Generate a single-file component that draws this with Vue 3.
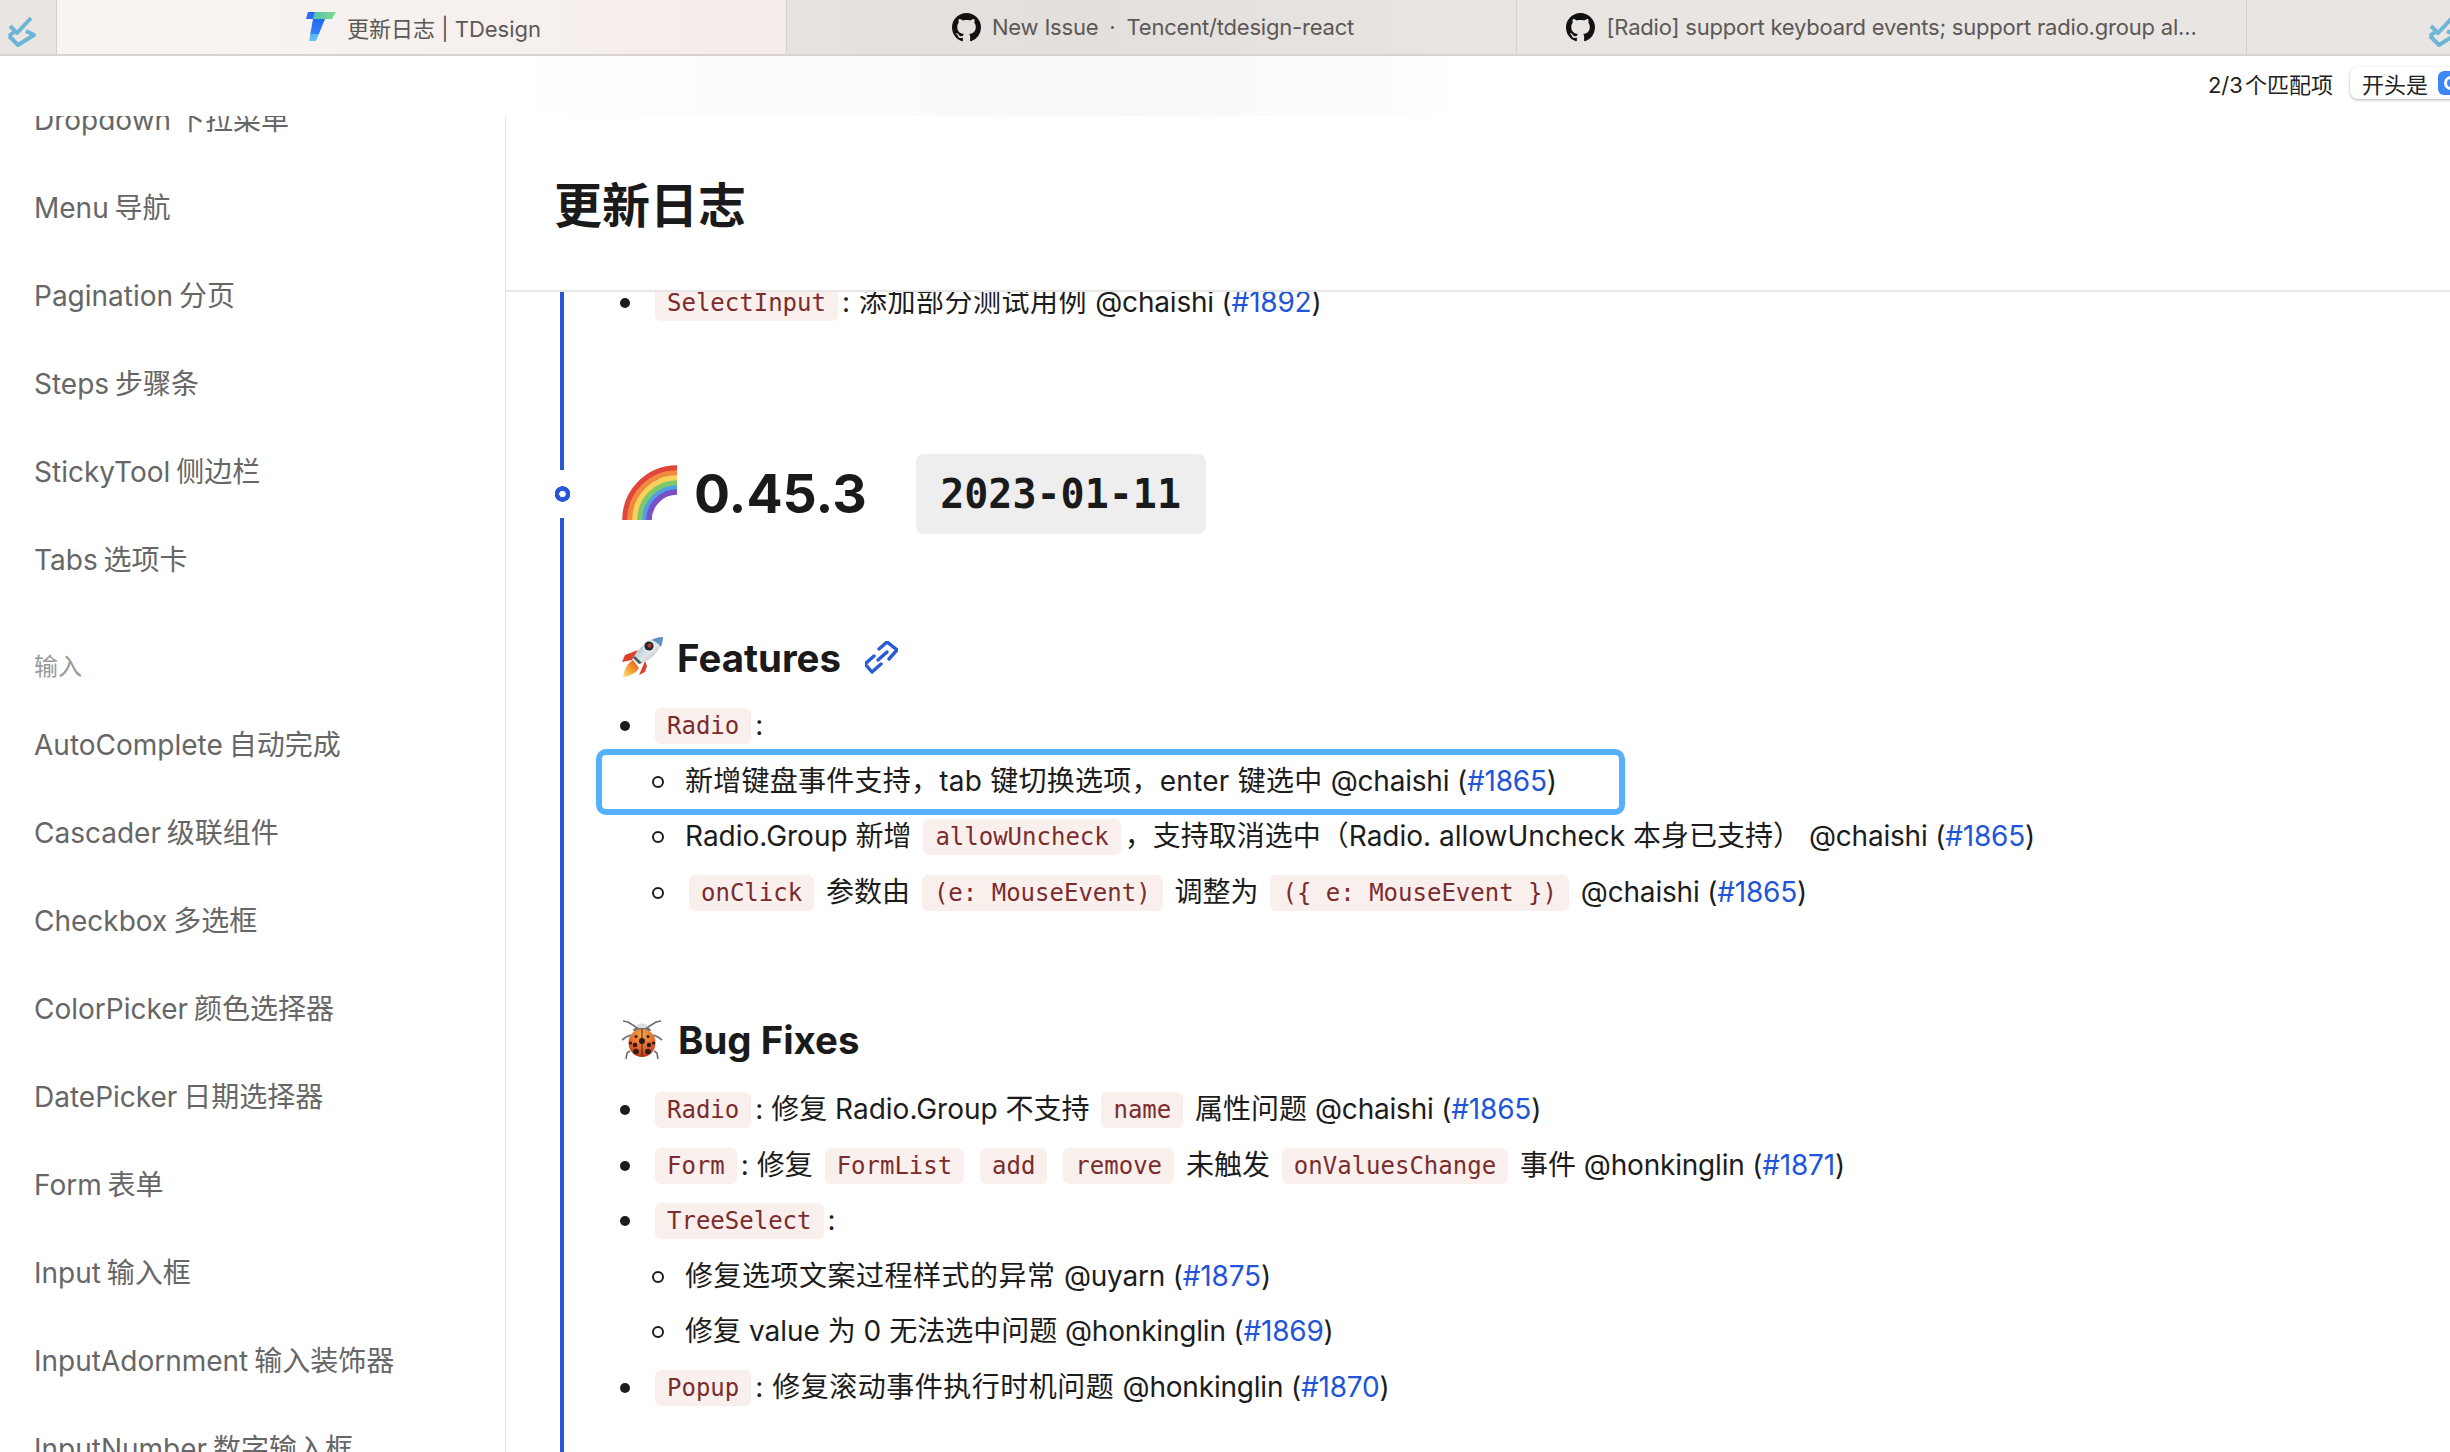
<script setup>
const gh = 'M8 0C3.58 0 0 3.58 0 8c0 3.54 2.29 6.53 5.47 7.59.4.07.55-.17.55-.38 0-.19-.01-.82-.01-1.49-2.01.37-2.53-.49-2.69-.94-.09-.23-.48-.94-.82-1.13-.28-.15-.68-.52-.01-.53.63-.01 1.08.58 1.23.82.72 1.21 1.87.87 2.33.66.07-.52.28-.87.51-1.07-1.78-.2-3.64-.89-3.64-3.95 0-.87.31-1.59.82-2.15-.08-.2-.36-1.02.08-2.12 0 0 .67-.21 2.2.82.64-.18 1.32-.27 2-.27s1.36.09 2 .27c1.53-1.04 2.2-.82 2.2-.82.44 1.1.16 1.92.08 2.12.51.56.82 1.27.82 2.15 0 3.07-1.87 3.75-3.65 3.95.29.25.54.73.54 1.48 0 1.07-.01 1.93-.01 2.2 0 .21.15.46.55.38A8.01 8.01 0 0 0 16 8c0-4.42-3.58-8-8-8z'
const before = ['Dropdown 下拉菜单', 'Menu 导航', 'Pagination 分页', 'Steps 步骤条', 'StickyTool 侧边栏', 'Tabs 选项卡']
const after = ['AutoComplete 自动完成', 'Cascader 级联组件', 'Checkbox 多选框', 'ColorPicker 颜色选择器', 'DatePicker 日期选择器', 'Form 表单', 'Input 输入框', 'InputAdornment 输入装饰器', 'InputNumber 数字输入框']
const bands = [
  ['#e2453c', 52], ['#f08a3c', 47], ['#f8d25a', 42], ['#7cc86a', 37], ['#4f9fe6', 32], ['#7a4fc8', 28]
]
</script>

<template>
  <div class="app">
    <div class="tabs">
      <div class="tab tab-pin">
        <svg class="check" viewBox="0 0 40 45" fill="none" stroke="#6db6d6" stroke-width="4" stroke-linejoin="round">
          <path d="M10 21l7 7L31 13"/>
          <path d="M9 31l9 9 16-10-8-4"/>
          <path d="M9 31l5-4"/>
        </svg>
      </div>
      <div class="tab tab-active">
        <svg class="logo" viewBox="0 0 30 30">
          <defs>
            <linearGradient id="tbar" x1="0" x2="1" y1="0" y2="0"><stop offset="0" stop-color="#4cc6a8"/><stop offset="1" stop-color="#82d992"/></linearGradient>
            <linearGradient id="tstem" x1="0" x2="0" y1="0" y2="1"><stop offset="0" stop-color="#1f6af2"/><stop offset=".66" stop-color="#2f80f6"/><stop offset=".7" stop-color="#54b4f6"/><stop offset="1" stop-color="#62c4f6"/></linearGradient>
          </defs>
          <path d="M9 0h21l-4 7H7z" fill="url(#tbar)"/>
          <path d="M2 0h7L7 7H0z" fill="#2b6cf5"/>
          <path d="M7 7h12l-9 22H3z" fill="url(#tstem)"/>
        </svg>
        <span>更新日志 | TDesign</span>
      </div>
      <div class="tab tab-two">
        <svg class="gh" viewBox="0 0 16 16"><path :d="gh"/></svg>
        <span class="tab-text">New Issue<span class="sep"> · </span>Tencent/tdesign-react</span>
      </div>
      <div class="tab">
        <svg class="gh" viewBox="0 0 16 16"><path :d="gh"/></svg>
        <span class="tab-text">[Radio] support keyboard events; support radio.group al...</span>
      </div>
      <div class="tab tab-end">
        <svg class="check" viewBox="0 0 40 45" fill="none" stroke="#6db6d6" stroke-width="4" stroke-linejoin="round">
          <path d="M10 21l7 7L31 13"/>
          <path d="M9 31l9 9 16-10-8-4"/>
          <path d="M9 31l5-4"/>
        </svg>
      </div>
    </div>

    <div class="findbar">
      <span class="count">2/3 个匹配项</span>
      <div class="findbtn"><span>开头是</span><i class="findmark"></i></div>
    </div>

    <div class="page">
      <aside class="side">
        <div class="side-inner">
          <div v-for="n in before" :key="n" class="nav">{{ n }}</div>
          <div class="group">输入</div>
          <div v-for="n in after" :key="n" class="nav">{{ n }}</div>
        </div>
      </aside>

      <main class="main">
        <header class="head"><h1>更新日志</h1></header>
        <div class="body">
          <div class="timeline">
            <ul class="first">
              <li class="wide"><code>SelectInput</code>: 添加部分测试用例 <span class="by">@chaishi (<a>#1892</a>)</span></li>
            </ul>

            <div class="version">
              <i class="dot"></i>
              <svg class="rainbow" viewBox="0 0 57 55" fill="none">
                <circle v-for="b in bands" :key="b[1]" cx="57" cy="55" :r="b[1]" :stroke="b[0]" stroke-width="5.6"/>
              </svg>
              <h2>0.45.3</h2>
              <span class="date">2023-01-11</span>
            </div>

            <h3 class="features">
              <svg class="rocket" viewBox="10 7 44 41">
                <defs>
                  <linearGradient id="rb" x1="0" y1="0" x2="1" y2="1"><stop offset="0" stop-color="#8ea4b8"/><stop offset=".55" stop-color="#dfe6ea"/><stop offset="1" stop-color="#a9a39a"/></linearGradient>
                  <linearGradient id="rf" x1="1" y1="0" x2="0" y2="1"><stop offset="0" stop-color="#e2452c"/><stop offset=".55" stop-color="#f5a02c"/><stop offset="1" stop-color="#fde58a"/></linearGradient>
                </defs>
                <path d="M28 20L15 25l-3 7 10-2z" fill="#d9432c"/>
                <path d="M35 31l-6 14 6-3 2-6z" fill="#d9432c"/>
                <path d="M23 30c-5 3-9 9-10 17 7-1 13-4 16-9z" fill="url(#rf)"/>
                <path d="M53 7C42 7 31 14 25 26l7 7c12-5 20-15 21-26z" fill="url(#rb)"/>
                <path d="M53 7c-4 0-8 1-11 3 3 1 7 4 9 7 1-3 2-7 2-10z" fill="#5f8fc4"/>
                <path d="M25 26l7 7-3 1-6-6z" fill="#4c5966"/>
                <circle cx="39" cy="16" r="6" fill="#e6ecef"/>
                <circle cx="39" cy="16" r="4.6" fill="#23262c"/>
                <circle cx="39.6" cy="15.6" r="2.2" fill="#b5362c"/>
              </svg>
              <span>Features</span>
              <svg class="link" viewBox="11 12 33 33" fill="none" stroke="#2a5bd7" stroke-width="3.4" stroke-linejoin="round" stroke-linecap="round">
                <path d="M25 20l8-7 10 8-8 9"/>
                <path d="M20 27l-9 8 7 8 9-8"/>
                <path d="M24 31l9-8"/>
              </svg>
            </h3>

            <ul>
              <li><code>Radio</code>:
                <ul>
                  <li class="hit">新增键盘事件支持，tab 键切换选项，enter 键选中 <span class="by">@chaishi (<a>#1865</a>)</span></li>
                  <li>Radio.Group 新增 <code>allowUncheck</code>，支持取消选中（Radio. allowUncheck 本身已支持） <span class="by">@chaishi (<a>#1865</a>)</span></li>
                  <li><code>onClick</code> 参数由 <code>(e: MouseEvent)</code> 调整为 <code>({ e: MouseEvent })</code> <span class="by">@chaishi (<a>#1865</a>)</span></li>
                </ul>
              </li>
            </ul>

            <h3 class="bugs">
              <svg class="bug" viewBox="9 7 42 40">
                <defs>
                  <radialGradient id="lb" cx=".5" cy=".2" r=".9"><stop offset="0" stop-color="#f3a640"/><stop offset=".55" stop-color="#e2652b"/><stop offset="1" stop-color="#a82717"/></radialGradient>
                </defs>
                <g stroke="#6e6e6e" stroke-width="1.6" fill="none">
                  <path d="M24 14L16 9 11 8M36 14l8-5 5-1"/>
                  <path d="M19 22l-5 2-4 3M41 22l5 2 4 3"/>
                  <path d="M18 38l-3 2-1 6M42 38l3 2 1 6"/>
                </g>
                <path d="M21 18c1-7 17-7 18 0z" fill="#6f7376"/>
                <path d="M25 12c3-2 7-2 10 0l-1 3h-8z" fill="#d9dcde"/>
                <ellipse cx="30" cy="30" rx="13.5" ry="14" fill="url(#lb)"/>
                <path d="M30 16v28" stroke="#4a2418" stroke-width="1"/>
                <g fill="#2c1a14">
                  <circle cx="30" cy="28" r="3"/><circle cx="23" cy="32" r="2.3"/><circle cx="37" cy="32" r="2.3"/>
                  <circle cx="24" cy="38.5" r="2.8"/><circle cx="36" cy="38.5" r="2.8"/>
                  <circle cx="18.5" cy="30" r="1.6"/><circle cx="41.5" cy="30" r="1.6"/>
                  <circle cx="24" cy="23.5" r="1.5"/><circle cx="36" cy="23.5" r="1.5"/>
                </g>
              </svg>
              <span>Bug Fixes</span>
            </h3>

            <ul class="fixes">
              <li><code>Radio</code>: 修复 Radio.Group 不支持 <code>name</code> 属性问题 <span class="by">@chaishi (<a>#1865</a>)</span></li>
              <li><code>Form</code>: 修复 <code>FormList</code> <code>add</code> <code>remove</code> 未触发 <code>onValuesChange</code> 事件 <span class="by">@honkinglin (<a>#1871</a>)</span></li>
              <li><code>TreeSelect</code>:
                <ul>
                  <li class="wide">修复选项文案过程样式的异常 <span class="by">@uyarn (<a>#1875</a>)</span></li>
                  <li>修复 value 为 0 无法选中问题 <span class="by">@honkinglin (<a>#1869</a>)</span></li>
                </ul>
              </li>
              <li class="wide"><code>Popup</code>: 修复滚动事件执行时机问题 <span class="by">@honkinglin (<a>#1870</a>)</span></li>
            </ul>
          </div>
        </div>
      </main>
    </div>
  </div>
</template>

<style>
html, body { margin: 0; overflow: hidden; background: #fff; }
</style>

<style scoped>
.app {
  width: 2450px;
  height: 1452px;
  display: flex;
  flex-direction: column;
  overflow: hidden;
  font-family: Inter, "Noto Sans CJK SC", sans-serif;
  color: #1c1c1c;
}
.tabs {
  height: 54px;
  flex: none;
  display: flex;
  background: #e9e5e3;
  border-bottom: 2px solid #d6d3d1;
}
.tab {
  width: 730px;
  box-sizing: border-box;
  flex: none;
  display: flex;
  align-items: center;
  justify-content: center;
  gap: 11px;
  border-right: 1px solid #d3d0ce;
  font-size: 22px;
  color: #5c5856;
}
.tab-pin { width: 57px; justify-content: flex-start; }
.tab-active { padding-left: 4px; background: linear-gradient(90deg, #f8f4f1, #f6f1ef 55%, #f5ecea); }
.tab-two { padding-left: 3px; background: linear-gradient(90deg, #e6e2e0, #e3dfdd 40%, #e9e5e3); }
.tab-end { flex: 1; width: auto; border-right: 0; justify-content: flex-start; padding-left: 174px; }
.tab-text { letter-spacing: -.2px; }
.sep { word-spacing: 5px; }
.check { width: 40px; height: 45px; flex: none; }
.logo { width: 30px; height: 30px; flex: none; }
.gh { width: 29px; height: 29px; flex: none; fill: #111; }

.findbar {
  height: 60px;
  box-sizing: border-box;
  padding-bottom: 6px;
  flex: none;
  display: flex;
  align-items: center;
  justify-content: flex-end;
  gap: 17px;
  margin-right: -24px;
  background: linear-gradient(90deg, #fff 20%, #fbfafa 38%, #fbf9f8 46%, #fbfbfc 54%, #fff 59%);
  font-size: 22px;
  color: #222;
}
.count { word-spacing: -4px; }
.findbtn {
  width: 112px;
  height: 32px;
  display: flex;
  align-items: center;
  padding-left: 12px;
  gap: 10px;
  background: #fff;
  border-radius: 8px;
  box-shadow: 0 1px 3px rgba(0, 0, 0, .3);
}
.findmark {
  position: relative;
  width: 24px;
  height: 24px;
  border-radius: 6px;
  background: #3d86f5;
}
.findmark::before {
  content: "";
  position: absolute;
  left: 6px;
  top: 5px;
  width: 14px;
  height: 14px;
  box-sizing: border-box;
  border: 3px solid #fff;
  border-radius: 50%;
}

.page { flex: 1; min-height: 0; display: flex; }
.side {
  width: 505px;
  flex: none;
  border-right: 1px solid #e4e4e4;
  overflow: hidden;
}
.side-inner { margin-top: -40px; }
.nav {
  height: 88px;
  line-height: 88px;
  padding-left: 34px;
  font-size: 28px;
  word-spacing: -2px;
  color: #666;
}
.group {
  height: 56px;
  padding-top: 41px;
  line-height: 44px;
  padding-left: 34px;
  font-size: 24px;
  color: #999;
}

.main { flex: 1; min-width: 0; display: flex; flex-direction: column; }
.head {
  height: 174px;
  flex: none;
  display: flex;
  align-items: center;
  padding-left: 48px;
  border-bottom: 2px solid #e7e7e7;
}
h1 { margin: 0; font-size: 48px; font-weight: 700; line-height: 1; color: #1a1a1a; padding-top: 6px; }
.body { flex: 1; min-height: 0; overflow: hidden; }
.timeline {
  margin-left: 54px;
  border-left: 4px solid #2657d6;
  padding-left: 87px;
  min-height: 1300px;
}
ul { list-style: none; margin: 0; padding: 0; font-size: 28px; line-height: 55.8px; }
ul.first { margin-top: -17px; }
ul.fixes, ul.fixes ul { line-height: 55.6px; }
li { position: relative; }
li::before {
  content: "";
  position: absolute;
  left: -31px;
  top: 23px;
  width: 10px;
  height: 10px;
  border-radius: 50%;
  background: #1c1c1c;
}
li ul { margin-left: 34px; }
li li::before {
  left: -33px;
  top: 22px;
  width: 8px;
  height: 8px;
  background: transparent;
  border: 2px solid #1c1c1c;
}
.wide { letter-spacing: .5px; }
.hit { letter-spacing: .25px; }
.hit::after {
  content: "";
  position: absolute;
  left: -89px;
  top: -5px;
  width: 1017px;
  height: 54px;
  border: 6px solid #55b1fb;
  border-radius: 10px;
  pointer-events: none;
}
code {
  display: inline-block;
  height: 36px;
  line-height: 36px;
  padding: 0 12px;
  margin: 0 4px;
  vertical-align: 1px;
  border-radius: 6px;
  background: #f9efed;
  color: #7b2c2c;
  font-family: "DejaVu Sans Mono", monospace;
  font-size: 24px;
  letter-spacing: 0;
}
a { color: #1f55d8; }
.by { letter-spacing: -.2px; }

.version {
  position: relative;
  display: flex;
  align-items: center;
  height: 80px;
  margin-top: 123px;
}
.dot {
  position: absolute;
  left: -96.5px;
  top: 16px;
  width: 15px;
  height: 48px;
  background: #fff radial-gradient(circle at center, #fff 0 3px, #2657d6 3.5px 7.5px, #fff 8px);
}
.rainbow { width: 57px; height: 55px; margin-left: -31px; margin-top: -3px; flex: none; }
h2 {
  margin: 0 0 0 17px;
  font-size: 53.5px;
  font-weight: 700;
  line-height: 1;
  color: #1a1a1a;
}
.date {
  margin-left: 49px;
  height: 80px;
  line-height: 80px;
  padding: 0 24.5px;
  border-radius: 8px;
  background: #eee;
  font-family: "DejaVu Sans Mono", monospace;
  font-weight: 700;
  font-size: 40px;
  color: #1a1a1a;
}
h3 {
  margin: 0;
  height: 50px;
  display: flex;
  align-items: center;
  font-size: 38.4px;
  font-weight: 700;
  line-height: 50px;
  color: #1a1a1a;
}
h3.features { margin-top: 99px; margin-bottom: 15px; }
h3.bugs { margin-top: 94px; margin-bottom: 17px; }
.rocket { width: 44px; height: 41px; margin-left: -31px; margin-right: 13px; flex: none; }
.bug { width: 42px; height: 40px; margin-left: -30px; margin-right: 15px; flex: none; }
.link { width: 33px; height: 33px; margin-left: 24px; flex: none; }
</style>
